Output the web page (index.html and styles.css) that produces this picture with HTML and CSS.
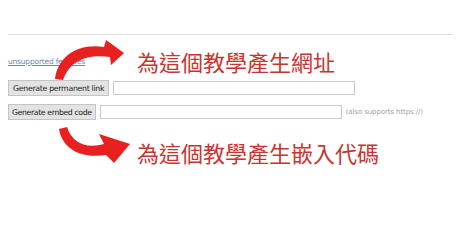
FILE: index.html
```html
<!DOCTYPE html>
<html>
<head>
<meta charset="utf-8">
<link rel="stylesheet" href="styles.css">
</head>
<body>
<div class="page">
  <div class="rule"></div>
  <div class="note-row first">
    <a class="link" href="#">unsupported features</a>
    <span class="note">為這個教學產生網址</span>
  </div>
  <div class="form-row r1">
    <button class="btn">Generate permanent link</button>
    <input class="field" type="text">
  </div>
  <div class="form-row r2">
    <button class="btn">Generate embed code</button>
    <input class="field" type="text">
    <span class="hint">(also supports https://)</span>
  </div>
  <div class="note-row second">
    <span class="note">為這個教學產生嵌入代碼</span>
  </div>
  <svg class="arrow" width="474" height="237" viewBox="0 0 474 237">
    <path d="M55 79 C58 56 78 43 104 47 L106 40 L124 53 L111 65 L110 57 C88 54 70 60 63 80 Z" fill="#e8201f"/>
    <path d="M59 129 C62 148 80 159 106 155 L114 163 L130 144 L99 134 L104 144 C86 149 72 143 67 127 Z" fill="#e8201f"/>
  </svg>
</div>
</body>
</html>
```
FILE: styles.css
```css
html, body {
  margin: 0;
  padding: 0;
  background: #ffffff;
}
.page {
  position: relative;
  width: 474px;
  height: 237px;
  padding: 34px 0 0 8px;
  box-sizing: border-box;
  font-family: "Liberation Sans", Arial, sans-serif;
}
.rule {
  width: 445px;
  height: 1px;
  background: #dcdcdc;
}
.note-row {
  display: flex;
  align-items: center;
}
.note-row.first {
  height: 38px;
  margin-top: 7px;
}
.note {
  font-family: "Noto Sans CJK TC", sans-serif;
  font-size: 22px;
  color: #c8342f;
  line-height: 26px;
}
.link {
  width: 129px;
  font-family: "DejaVu Sans", sans-serif;
  font-size: 7.5px;
  letter-spacing: -0.2px;
  color: #7284a8;
  text-decoration: underline;
  margin-top: 1px;
}
.form-row {
  display: flex;
  align-items: center;
  gap: 4px;
  height: 16px;
}
.r2 {
  margin-top: 8px;
}
.btn {
  height: 16px;
  margin: 0;
  padding: 0 4px;
  font-family: "DejaVu Sans", sans-serif;
  font-size: 7.8px;
  letter-spacing: -0.3px;
  color: #222;
  background: #e3e3e3;
  border: 1px solid #c4c4c4;
  border-radius: 0;
}
.r2 .btn {
  padding: 0 3px;
  letter-spacing: -0.4px;
}
.field {
  width: 242px;
  height: 14px;
  margin: 0;
  padding: 0;
  box-sizing: border-box;
  border: 1px solid #c8c8c8;
  background: #fff;
}
.hint {
  font-family: "DejaVu Sans", sans-serif;
  font-size: 7px;
  color: #a0a0a0;
  letter-spacing: -0.1px;
}
.note-row.second {
  margin-top: 19px;
  padding-left: 129px;
  height: 26px;
}
.arrow {
  position: absolute;
  left: 0;
  top: 0;
  pointer-events: none;
}
```
